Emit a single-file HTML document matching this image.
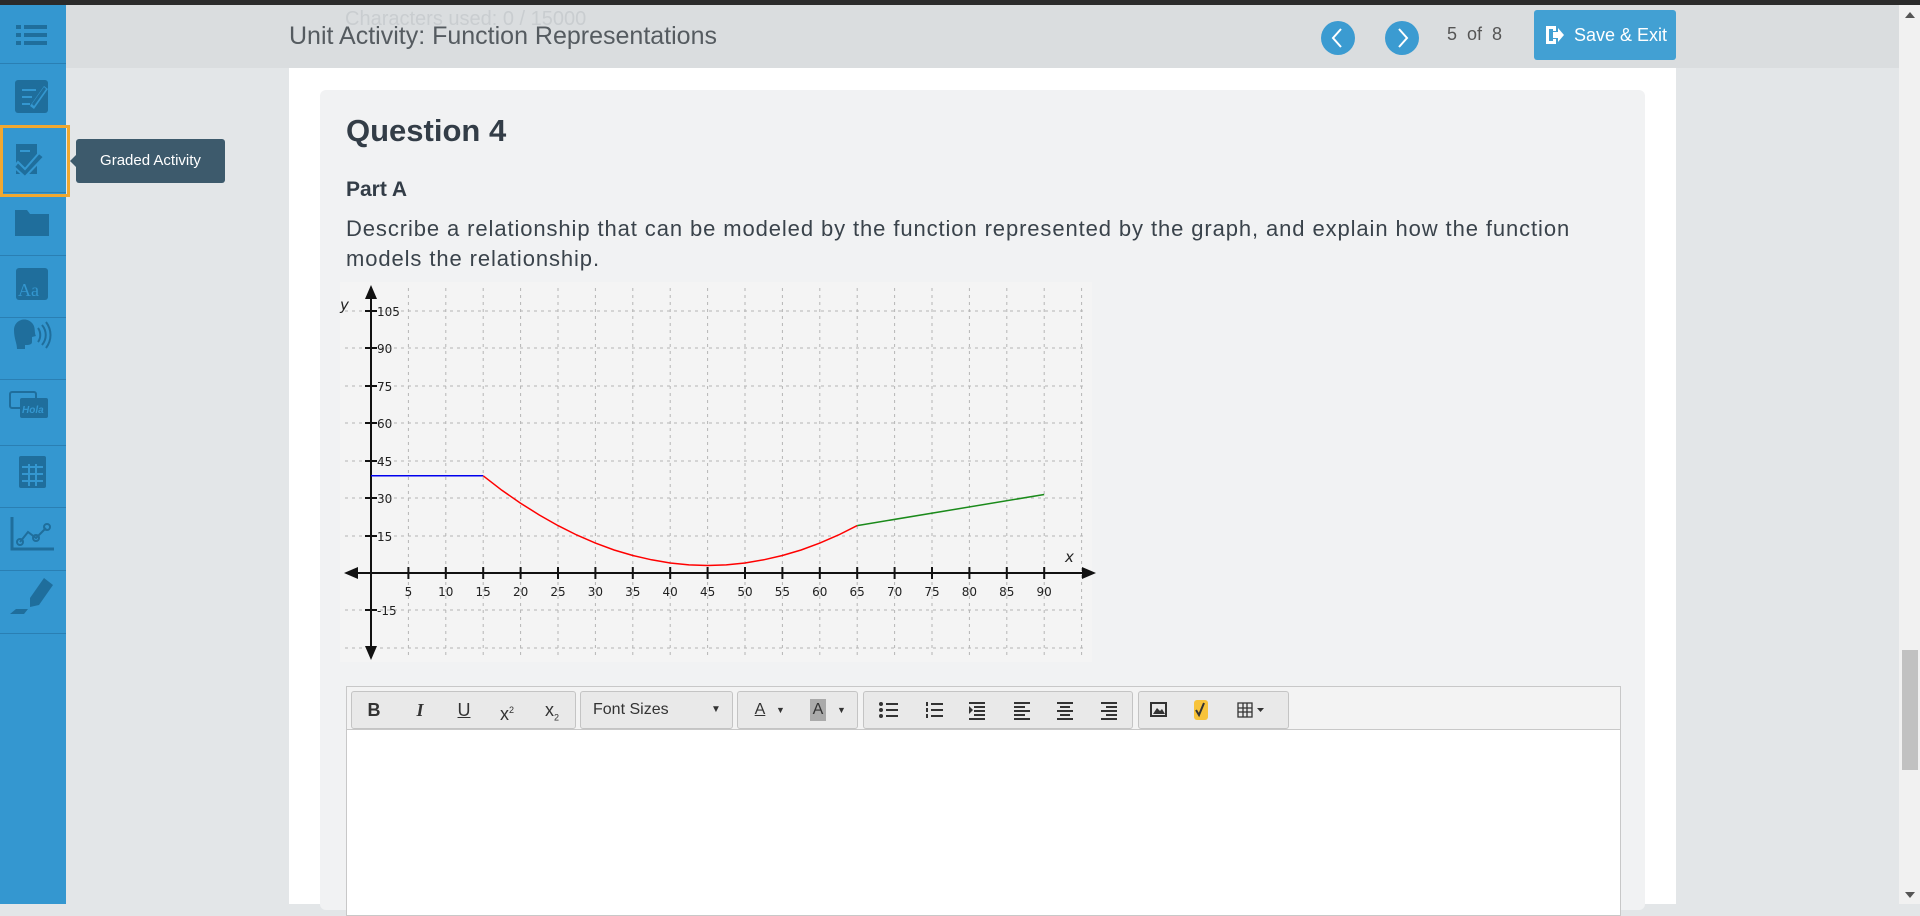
<!DOCTYPE html>
<html><head><meta charset="utf-8"><style>
*{margin:0;padding:0;box-sizing:border-box}
body{width:1920px;height:904px;overflow:hidden;background:#e3e6e8;font-family:"Liberation Sans",sans-serif;position:relative}
.abs{position:absolute}
#topbar{left:0;top:0;width:1920px;height:5px;background:#2b2b2b}
#side{left:0;top:5px;width:66px;height:899px;background:#3497d0}
.sep{position:absolute;left:0;width:66px;height:1px;background:#2a7fb3}
#header{left:66px;top:5px;width:1833px;height:63px;background:#dadddf}
#white{left:289px;top:68px;width:1387px;height:836px;background:#fff}
#card{left:320px;top:90px;width:1325px;height:820px;background:#f1f2f3;border-radius:6px}
.btn{background:#e9e9e9;border:1px solid #c4c4c4;border-radius:3px;height:38px;top:691px}
.tb{position:absolute;top:0;height:36px;line-height:36px;text-align:center;font-size:18px;color:#333}
</style></head><body>
<div id="topbar" class="abs"></div>
<div id="header" class="abs"></div>
<div class="abs" style="left:345px;top:8px;font-size:20px;color:#c9cdd0">Characters used: 0 / 15000</div>
<div class="abs" style="left:289px;top:22px;font-size:25px;color:#555b60">Unit Activity: Function Representations</div>
<svg class="abs" style="left:1320px;top:20px" width="36" height="36"><circle cx="18" cy="18" r="17" fill="#3b9bd1"/><path d="M21 9l-8 9 8 9" stroke="#fff" stroke-width="2" fill="none"/></svg>
<svg class="abs" style="left:1384px;top:20px" width="36" height="36"><circle cx="18" cy="18" r="17" fill="#3b9bd1"/><path d="M15 9l8 9-8 9" stroke="#fff" stroke-width="2" fill="none"/></svg>
<div class="abs" style="left:1447px;top:24px;font-size:18px;color:#555">5&nbsp; of&nbsp; 8</div>
<div class="abs" style="left:1534px;top:10px;width:142px;height:50px;background:#42a0d3;border-radius:3px;color:#fff;font-size:18px;line-height:50px;padding-left:40px">Save &amp; Exit</div>
<svg class="abs" style="left:1545px;top:25px" width="20" height="20"><path d="M1 1h10v5h-3v-2h-4v12h4v-2h3v5h-10z" fill="#fff"/><path d="M8 7h5v-4l6 7-6 7v-4h-5z" fill="#fff"/></svg>
<div class="abs" style="left:1899px;top:5px;width:21px;height:899px;background:#f1f1f1"></div>
<div class="abs" style="left:1905px;top:12px;width:0;height:0;border-left:5px solid transparent;border-right:5px solid transparent;border-bottom:6px solid #555"></div>
<div class="abs" style="left:1902px;top:650px;width:16px;height:120px;background:#c1c1c1"></div>
<div class="abs" style="left:1905px;top:892px;width:0;height:0;border-left:5px solid transparent;border-right:5px solid transparent;border-top:6px solid #555"></div>

<div id="side" class="abs">
<div class="sep" style="top:58px"></div><div class="sep" style="top:120px"></div><div class="sep" style="top:187px"></div><div class="sep" style="top:250px"></div><div class="sep" style="top:312px"></div><div class="sep" style="top:374px"></div><div class="sep" style="top:440px"></div><div class="sep" style="top:502px"></div><div class="sep" style="top:565px"></div><div class="sep" style="top:628px"></div>
</div>
<svg class="abs" style="left:0;top:0" width="66" height="640" fill="#1f6e9c">
<rect x="16" y="25" width="5" height="4"/><rect x="24" y="25" width="23" height="4"/><rect x="16" y="33" width="5" height="4"/><rect x="24" y="33" width="23" height="4"/><rect x="16" y="41" width="5" height="4"/><rect x="24" y="41" width="23" height="4"/>
<rect x="15" y="80" width="33" height="33" rx="3"/><path d="M22 90h14M22 97h10M22 104h8" stroke="#3497d0" stroke-width="2"/><path d="M30 106l14-20 4 3-14 20z" fill="#3497d0"/><path d="M32 104l12-17 2 2-12 17z"/>
<rect x="16" y="144" width="21" height="30"/><path d="M20 151h10" stroke="#3497d0" stroke-width="2"/><path d="M18 162l7 7 14-16 5 4-19 20-11-10z" stroke="#3497d0" stroke-width="2"/>
<path d="M15 210h12l3 4h19v22h-34z"/>
<rect x="16" y="268" width="32" height="32" rx="3"/><text x="18" y="296" font-family="Liberation Serif" font-size="18" fill="#3497d0">Aa</text>
<path d="M14 330c0-10 12-14 18-7 4 4 2 10 4 13l-4 1v5c0 3-4 3-7 3v4h-8c0-6-3-10-3-19z"/><path d="M38 328c3 4 3 10 0 14M42 325c5 6 5 14 0 20M46 322c6 8 6 18 0 26" stroke="#1f6e9c" stroke-width="2" fill="none"/>
<rect x="10" y="392" width="26" height="16" rx="2" fill="none" stroke="#1f6e9c" stroke-width="2"/><rect x="20" y="398" width="28" height="20" rx="2"/><text x="22" y="413" font-size="10" font-weight="bold" font-style="italic" fill="#3497d0">Hola</text>
<rect x="19" y="456" width="27" height="32" rx="2"/><path d="M22 467h21M22 474h21M22 481h21M29 464v22M36 464v22" stroke="#3497d0" stroke-width="2"/>
<path d="M12 517v32h42" stroke="#1f6e9c" stroke-width="3" fill="none"/><path d="M20 542l8-10 8 6 10-10" stroke="#1f6e9c" stroke-width="2" fill="none"/><circle cx="20" cy="542" r="3" fill="none" stroke="#1f6e9c" stroke-width="2"/><circle cx="36" cy="538" r="3" fill="none" stroke="#1f6e9c" stroke-width="2"/><circle cx="47" cy="527" r="3" fill="none" stroke="#1f6e9c" stroke-width="2"/>
<path d="M30 598l14-20 9 7-14 20-9 2z"/><path d="M10 614h14l4-5h-12z"/>
</svg>
<div class="abs" style="left:0;top:125px;width:70px;height:72px;border:3px solid #f0a830"></div>
<div class="abs" style="left:70px;top:154px;width:0;height:0;border-top:7px solid transparent;border-bottom:7px solid transparent;border-right:7px solid #3d5a6c"></div>
<div class="abs" style="left:76px;top:139px;width:149px;height:44px;background:#3d5a6c;border-radius:3px;color:#fff;font-size:15px;line-height:44px;text-align:center">Graded Activity</div>

<div id="white" class="abs"></div>
<div id="card" class="abs"></div>
<div class="abs" style="left:346px;top:113px;font-size:31px;font-weight:bold;color:#333d47">Question 4</div>
<div class="abs" style="left:346px;top:178px;font-size:21px;font-weight:bold;color:#333d47">Part A</div>
<div class="abs" style="left:346px;top:214px;width:1290px;font-size:22px;letter-spacing:0.9px;line-height:30px;color:#3a434b">Describe a relationship that can be modeled by the function represented by the graph, and explain how the function<br>models the relationship.</div>

<svg class="abs" style="left:330px;top:280px" width="770" height="390" font-family="DejaVu Sans" font-size="12">
<rect x="10" y="2" width="752" height="380" fill="#f4f4f4"/>
<g stroke="#b5b5b5" stroke-dasharray="3,4" stroke-width="1">
<path d="M78.4 8V375M115.8 8V375M153.2 8V375M190.6 8V375M228 8V375M265.4 8V375M302.8 8V375M340.2 8V375M377.6 8V375M415 8V375M452.4 8V375M489.8 8V375M527.2 8V375M564.6 8V375M602 8V375M639.4 8V375M676.8 8V375M714.2 8V375M751.6 8V375"/>
<path d="M15 31H755M15 68H755M15 106H755M15 143H755M15 181H755M15 218H755M15 256H755M15 330H755M15 368H755"/>
</g>
<g stroke="#111" stroke-width="2"><path d="M41 12V368M20 293H755"/>
<path d="M78.4 287v12M115.8 287v12M153.2 287v12M190.6 287v12M228 287v12M265.4 287v12M302.8 287v12M340.2 287v12M377.6 287v12M415 287v12M452.4 287v12M489.8 287v12M527.2 287v12M564.6 287v12M602 287v12M639.4 287v12M676.8 287v12M714.2 287v12M35 31h12M35 68h12M35 106h12M35 143h12M35 181h12M35 218h12M35 256h12M35 330h12"/></g>
<path d="M41 5l-6 14h12zM41 380l-6-14h12zM14 293l14-6v12zM766 293l-14-6v12z" fill="#111"/>
<path d="M41 195.8H153.2" stroke="#0000ee" stroke-width="1.5" fill="none"/>
<polyline points="153.2,195.8 171.9,210.3 190.6,223.2 209.3,235 228,245.6 246.7,255 265.4,263.1 284.1,270 302.8,275.5 321.5,279.8 340.2,283 358.9,284.9 377.6,285.5 396.3,284.9 415,283 433.7,279.8 452.4,275.5 471.1,270 489.8,263.1 508.5,255 527.2,245.6" stroke="#f00" stroke-width="1.5" fill="none"/>
<path d="M527.2 245.6L714.2 214.5" stroke="#1a8a1a" stroke-width="1.5" fill="none"/>
<g fill="#222"><text x="10" y="30" font-style="italic" font-size="15">y</text><text x="735" y="282" font-style="italic" font-size="15">x</text>
<text x="47" y="36">105</text><text x="47" y="73">90</text><text x="47" y="111">75</text><text x="47" y="148">60</text><text x="47" y="186">45</text><text x="47" y="223">30</text><text x="47" y="261">15</text><text x="47" y="335">-15</text>
<g text-anchor="middle"><text x="78.4" y="316">5</text><text x="115.8" y="316">10</text><text x="153.2" y="316">15</text><text x="190.6" y="316">20</text><text x="228" y="316">25</text><text x="265.4" y="316">30</text><text x="302.8" y="316">35</text><text x="340.2" y="316">40</text><text x="377.6" y="316">45</text><text x="415" y="316">50</text><text x="452.4" y="316">55</text><text x="489.8" y="316">60</text><text x="527.2" y="316">65</text><text x="564.6" y="316">70</text><text x="602" y="316">75</text><text x="639.4" y="316">80</text><text x="676.8" y="316">85</text><text x="714.2" y="316">90</text></g></g>
</svg>

<div class="abs" style="left:346px;top:686px;width:1275px;height:230px;border:1px solid #c8c8c8;background:#fff"></div>
<div class="abs" style="left:347px;top:687px;width:1273px;height:43px;background:#f3f3f3;border-bottom:1px solid #c8c8c8"></div>
<div class="abs btn" style="left:351px;width:225px">
<div class="tb" style="left:10px;width:24px;font-weight:bold">B</div><div class="tb" style="left:56px;width:24px;font-style:italic;font-family:'Liberation Serif';font-weight:bold">I</div><div class="tb" style="left:100px;width:24px;text-decoration:underline">U</div><div class="tb" style="left:143px;width:24px">x<sup style="font-size:9px">2</sup></div><div class="tb" style="left:188px;width:24px">x<sub style="font-size:9px">2</sub></div></div>
<div class="abs btn" style="left:580px;width:153px"><div class="tb" style="left:12px;font-size:16px">Font Sizes</div><div class="tb" style="left:130px;font-size:10px">▼</div></div>
<div class="abs btn" style="left:737px;width:121px"><div class="tb" style="left:14px;width:16px;font-size:16px;text-decoration:underline">A</div><div class="tb" style="left:38px;font-size:9px">▼</div><div class="tb" style="left:72px;width:16px;font-size:16px;background:#aaa;height:22px;line-height:22px;top:7px">A</div><div class="tb" style="left:99px;font-size:9px">▼</div></div>
<div class="abs btn" style="left:863px;width:270px">
<svg width="270" height="36" fill="#333"><circle cx="17" cy="12" r="2"/><circle cx="17" cy="18" r="2"/><circle cx="17" cy="24" r="2"/><path d="M22 11h12v2H22zM22 17h12v2H22zM22 23h12v2H22z"/><path d="M67 11h12v2H67zM67 17h12v2H67zM67 23h12v2H67zM62 10h2v4h-2zM62 16h2v4h-2zM62 22h2v4h-2z"/><path d="M105 10h16v2h-16zM110 14h11v2h-11zM110 18h11v2h-11zM110 22h11v2h-11zM105 26h16v2h-16zM105 14l4 4-4 4z"/><path d="M150 10h16v2h-16zM150 14h11v2h-11zM150 18h16v2h-16zM150 22h11v2h-11zM150 26h16v2h-16z"/><path d="M193 10h16v2h-16zM196 14h10v2h-10zM193 18h16v2h-16zM196 22h10v2h-10zM193 26h16v2h-16z"/><path d="M237 10h16v2h-16zM242 14h11v2h-11zM237 18h16v2h-16zM242 22h11v2h-11zM237 26h16v2h-16z"/></svg></div>
<div class="abs btn" style="left:1138px;width:151px">
<svg width="151" height="36"><rect x="12" y="11" width="15" height="13" fill="none" stroke="#333" stroke-width="2"/><path d="M14 22l4-6 3 3 2-2 3 5z" fill="#333"/><rect x="55" y="8" width="14" height="20" rx="3" fill="#f7c33a"/><path d="M57 18l3 5 5-12" stroke="#333" stroke-width="2" fill="none"/><path d="M99 11h14v14H99zM99 16h14M99 20h14M104 11v14M108 11v14" stroke="#333" stroke-width="1.3" fill="none"/><path d="M118 16h7l-3.5 4z" fill="#333"/></svg></div>
</body></html>
